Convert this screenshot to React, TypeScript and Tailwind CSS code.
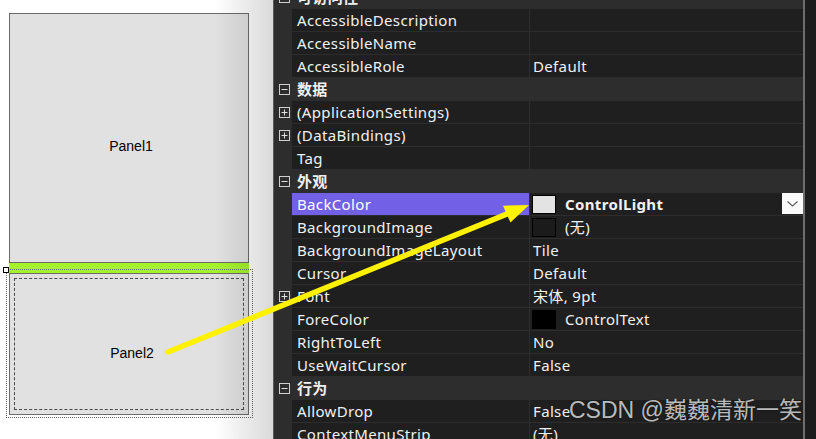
import React from "react";

type Row =
  | { kind: "cat"; label: string }
  | {
      kind: "prop";
      name: string;
      value?: string;
      expand?: boolean;
      swatch?: string;
      bold?: boolean;
      selected?: boolean;
    };

const rows: Row[] = [
  { kind: "cat", label: "可访问性" },
  { kind: "prop", name: "AccessibleDescription" },
  { kind: "prop", name: "AccessibleName" },
  { kind: "prop", name: "AccessibleRole", value: "Default" },
  { kind: "cat", label: "数据" },
  { kind: "prop", name: "(ApplicationSettings)", expand: true },
  { kind: "prop", name: "(DataBindings)", expand: true },
  { kind: "prop", name: "Tag" },
  { kind: "cat", label: "外观" },
  { kind: "prop", name: "BackColor", value: "ControlLight", swatch: "#e3e3e3", bold: true, selected: true },
  { kind: "prop", name: "BackgroundImage", value: "(无)", swatch: "#1b1b1b" },
  { kind: "prop", name: "BackgroundImageLayout", value: "Tile" },
  { kind: "prop", name: "Cursor", value: "Default" },
  { kind: "prop", name: "Font", value: "宋体, 9pt", expand: true },
  { kind: "prop", name: "ForeColor", value: "ControlText", swatch: "#000000" },
  { kind: "prop", name: "RightToLeft", value: "No" },
  { kind: "prop", name: "UseWaitCursor", value: "False" },
  { kind: "cat", label: "行为" },
  { kind: "prop", name: "AllowDrop", value: "False" },
  { kind: "prop", name: "ContextMenuStrip", value: "(无)" },
];

function ToggleBox({ minus }: { minus: boolean }) {
  return (
    <svg width="11" height="11" viewBox="0 0 11 11" className="block">
      <rect x="0.5" y="0.5" width="10" height="10" fill="none" stroke="#d0d0d0" strokeWidth="1" />
      <line x1="2.5" y1="5.5" x2="8.5" y2="5.5" stroke="#e0e0e0" strokeWidth="1" />
      {!minus && <line x1="5.5" y1="2.5" x2="5.5" y2="8.5" stroke="#e0e0e0" strokeWidth="1" />}
    </svg>
  );
}

function GridRow({ row }: { row: Row }) {
  if (row.kind === "cat") {
    return (
      <div className="h-[23px] flex items-center bg-[#2d2d2d]">
        <div className="w-[18px] pl-[5px] flex items-center">
          <ToggleBox minus />
        </div>
        <div className="pl-[5px] font-bold text-[#f1f1f1]">{row.label}</div>
      </div>
    );
  }
  return (
    <div className="h-[23px] flex items-start bg-[#2d2d2d]">
      <div className="w-[18px] h-[22px] pl-[5px] flex items-center">
        {row.expand && <ToggleBox minus={false} />}
      </div>
      <div
        className={
          row.selected
            ? "w-[237px] h-[22px] pl-[5px] flex items-center bg-[#7261e6] text-white"
            : "w-[237px] h-[22px] pl-[5px] flex items-center bg-[#1f1f1f] text-[#f1f1f1]"
        }
      >
        {row.name}
      </div>
      <div className="ml-px flex-1 h-[22px] flex items-center bg-[#1f1f1f] text-[#f1f1f1]">
        {row.swatch ? (
          <>
            <div className="ml-[2px] w-[24px] h-[19px] border border-black" style={{ backgroundColor: row.swatch }} />
            <div className={row.bold ? "ml-[9px] font-bold" : "ml-[9px]"}>{row.value}</div>
            {row.selected && (
              <div className="ml-auto w-[21px] h-[21px] bg-[#fafafa] flex items-center justify-center self-start">
                <svg width="11" height="6" viewBox="0 0 11 6">
                  <polyline points="0.5,0.5 5.5,5 10.5,0.5" fill="none" stroke="#606060" strokeWidth="1.2" />
                </svg>
              </div>
            )}
          </>
        ) : (
          <div className="pl-[3px]">{row.value}</div>
        )}
      </div>
    </div>
  );
}

export default function App() {
  return (
    <div
      className="relative w-[816px] h-[439px] overflow-hidden flex bg-white"
      style={{ fontFamily: '"Noto Sans", "Noto Sans CJK SC", sans-serif' }}
    >
      {/* Designer surface */}
      <div className="relative w-[273px] h-full bg-white pt-[13px] pl-[9px]">
        <div className="w-[240px] h-[250px] border border-[#6b6b6b] bg-[#e1e1e1] flex items-center justify-center">
          <span className="text-[14px] text-black pt-[17px] pl-[4px]" style={{ fontFamily: '"Liberation Sans", Arial, sans-serif' }}>
            Panel1
          </span>
        </div>
        <div className="w-[240px] h-[10px] bg-[#a6f22e]" />
        <div className="w-[240px] h-[142px] border border-[#6b6b6b] bg-[#e1e1e1] p-[4px]">
          <div className="w-full h-full border border-dashed border-[#4a4a4a] flex items-center justify-center">
            <span className="text-[14px] text-black pt-[18px] pl-[6px]" style={{ fontFamily: '"Liberation Sans", Arial, sans-serif' }}>
              Panel2
            </span>
          </div>
        </div>
        {/* selection adorner */}
        <div className="absolute left-[6px] top-[269px] w-[247px] h-[149px] border border-dotted border-[#6a6a6a]" />
        <div className="absolute left-[3px] top-[267px] w-[6px] h-[6px] border border-black bg-white" />
        {/* shadow gradient */}
        <div className="absolute top-0 bottom-0 left-[215px] right-0 pointer-events-none bg-gradient-to-r from-transparent to-[rgba(0,0,0,0.15)]" />
      </div>
      <div className="w-px h-full bg-[#5a5a5a]" />

      {/* Property grid */}
      <div className="w-[529px] h-full overflow-hidden bg-[#2d2d2d] text-[15px] leading-none tracking-[0.35px]">
        <div className="mt-[-14px]">
          {rows.map((r, i) => (
            <GridRow key={i} row={r} />
          ))}
        </div>
      </div>
      <div className="w-[2px] h-full bg-[#6e6e6e]" />
      <div className="flex-1 h-full bg-[#1c1c1c]" />

      {/* annotation arrow */}
      <svg className="absolute inset-0 pointer-events-none" width="816" height="439" viewBox="0 0 816 439">
        <line x1="168" y1="352" x2="512" y2="212" stroke="#fff200" strokeWidth="5.5" strokeLinecap="round" />
        <polygon points="529,205 503,205.7 510.5,222.5" fill="#fff200" />
      </svg>

      {/* watermark */}
      <div
        className="absolute left-[569px] top-[399px] text-[23px] leading-none text-[rgba(225,225,225,0.82)] whitespace-nowrap pointer-events-none"
        style={{ fontFamily: '"Liberation Sans", "Noto Sans CJK SC", sans-serif', textShadow: "0 0 2px rgba(0,0,0,0.6)" }}
      >
        CSDN @巍巍清新一笑
      </div>
    </div>
  );
}
